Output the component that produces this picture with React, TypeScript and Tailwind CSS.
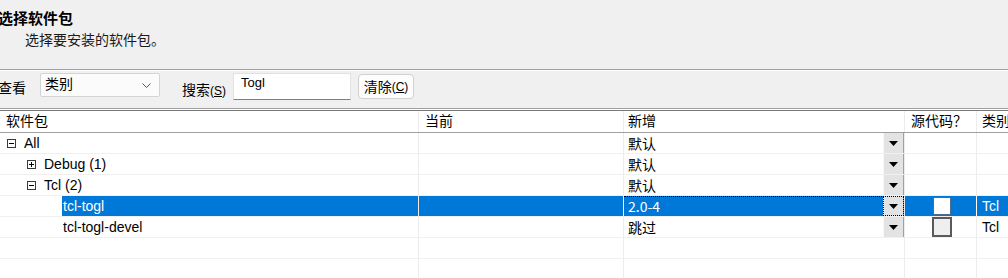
import React from "react";

const F = "font-['Liberation_Sans','Noto_Sans_CJK_SC',sans-serif]";

function TreeBox({ plus }: { plus?: boolean }) {
  return (
    <svg width="9" height="9" viewBox="0 0 9 9" className="block shrink-0">
      <rect x="0.5" y="0.5" width="8" height="8" fill="white" stroke="#3a3a3a" />
      <line x1="2" y1="4.5" x2="7" y2="4.5" stroke="#000" />
      {plus && <line x1="4.5" y1="2" x2="4.5" y2="7" stroke="#000" />}
    </svg>
  );
}

function DropBtn({ focus }: { focus?: boolean }) {
  return (
    <div
      className={
        "w-[21px] h-[20px] shrink-0 bg-[#e3e3e3] border-l border-l-[#f8f8f8] border-r border-r-[#a0a0a0] flex items-center justify-center " +
        (focus ? "outline outline-1 outline-dotted outline-black -outline-offset-1" : "")
      }
    >
      <svg width="9" height="5" viewBox="0 0 9 5">
        <polygon points="0,0 9,0 4.5,5" fill="#000" />
      </svg>
    </div>
  );
}

type RowT = {
  level?: number;
  box?: "plus" | "minus";
  name?: string;
  leaf?: boolean;
  add?: string;
  sel?: boolean;
  check?: "white" | "gray";
  cat?: string;
};

const rows: RowT[] = [
  { level: 0, box: "minus", name: "All", add: "默认" },
  { level: 1, box: "plus", name: "Debug (1)", add: "默认" },
  { level: 1, box: "minus", name: "Tcl (2)", add: "默认" },
  { leaf: true, name: "tcl-togl", add: "2.0-4", sel: true, check: "white", cat: "Tcl" },
  { leaf: true, name: "tcl-togl-devel", add: "跳过", check: "gray", cat: "Tcl" },
  {},
  {},
];

function Row({ r }: { r: RowT }) {
  const blue = "bg-[#0078d7] text-white";
  const sepLine = r.sel ? "border-r-white" : "border-r-[#ececec]";
  return (
    <div className="flex h-[21px] border-b border-b-[#f0f0f0] text-[14px] leading-[20px] text-black">
      {/* col1 */}
      <div className={"w-[419px] shrink-0 flex items-center border-r " + (r.sel ? "border-r-[#ececec]" : "border-r-[#ececec]")}>
        {r.name && !r.leaf && (
          <div className={"flex items-center " + (r.level === 0 ? "pl-[7px]" : "pl-[27px]")}>
            <TreeBox plus={r.box === "plus"} />
            <span className="ml-[8px]">{r.name}</span>
          </div>
        )}
        {r.leaf && (
          <div className="flex h-full flex-1 pl-[62px]">
            <div className={"flex-1 h-full pl-[1px] " + (r.sel ? blue : "")}>{r.name}</div>
          </div>
        )}
      </div>
      {/* col2 */}
      <div className={"w-[205px] shrink-0 border-r " + sepLine + " " + (r.sel ? blue : "")}></div>
      {/* col3 */}
      <div className="w-[281px] shrink-0 border-r border-r-[#ececec] flex relative">
        {r.sel && <div className="absolute left-0 right-0 top-0 h-0 border-t border-dotted border-black" />}
        <div className={"flex-1 pl-[4px] " + (r.sel ? blue : "")}>
          {r.add && <span className="font-['Noto_Sans_CJK_SC','Liberation_Sans',sans-serif]">{r.add}</span>}
        </div>
        {r.add && <DropBtn focus={r.sel} />}
      </div>
      {/* col4 */}
      <div className={"w-[72px] shrink-0 border-r flex items-center justify-center " + sepLine + " " + (r.sel ? blue : "")}>
        {r.check === "white" && <div className="w-[18px] h-[18px] bg-white border border-[#4a6b94] ml-[2px]" />}
        {r.check === "gray" && <div className="w-[20px] h-[20px] bg-[#efefef] border-2 border-[#5a5a5a] ml-[2px]" />}
      </div>
      {/* col5 */}
      <div className={"flex-1 pl-[5px] " + (r.sel ? blue : "")}>{r.cat}</div>
    </div>
  );
}

export default function App() {
  return (
    <div className={"w-[1008px] h-[278px] overflow-hidden bg-[#f0f0f0] flex flex-col " + F}>
      {/* header area */}
      <div className="h-[69px] shrink-0 text-black">
        <div className="pt-[10px] -ml-[2px] text-[15px] font-bold leading-[18px]">选择软件包</div>
        <div className="pl-[25px] mt-[3px] text-[14px] leading-[18px] text-[#1a1a1a]">选择要安装的软件包。</div>
      </div>
      <div className="h-px bg-[#a0a0a0] shrink-0" />
      <div className="h-px bg-white shrink-0" />
      {/* toolbar */}
      <div className="h-[37px] shrink-0 flex items-start text-[14px] text-black">
        <div className="-ml-[2px] w-[42px] mt-[7px] leading-[20px]">查看</div>
        <div className="mt-[2px] w-[120px] h-[24px] bg-[#fbfbfb] border border-[#d4d4d4] rounded-[2px] flex items-start justify-between pl-[4px] pr-[8px]">
          <span className="leading-[20px]">类别</span>
          <svg width="9" height="5" viewBox="0 0 9 5" className="mt-[9px]">
            <polyline points="0.5,0.5 4.5,4.5 8.5,0.5" fill="none" stroke="#555" />
          </svg>
        </div>
        <div className="ml-[22px] w-[51px] mt-[9px] leading-[20px] whitespace-nowrap">
          搜索<span className="text-[12px]">(<span className="underline">S</span>)</span>
        </div>
        <div className="mt-[2px] w-[118px] h-[27px] bg-white border border-[#e2e2e2] border-b-[#808080] pl-[7px] text-[13px] leading-[18px]">
          Togl
        </div>
        <div className="mt-[3px] ml-[7px] w-[56px] h-[25px] bg-[#fdfdfd] border border-[#d0d0d0] rounded-[4px] flex items-center justify-center leading-[20px] whitespace-nowrap">
          清除<span className="text-[12px]">(<span className="underline">C</span>)</span>
        </div>
      </div>
      <div className="h-px bg-[#a0a0a0] shrink-0" />
      <div className="h-px bg-white shrink-0" />
      <div className="h-px bg-[#7a7a7a] shrink-0" />
      {/* table */}
      <div className="flex-1 bg-white">
        <div className="flex h-[22px] border-b border-b-[#a0a0a0] text-[14px] leading-[21px] text-black">
          <div className="w-[419px] shrink-0 border-r border-r-[#ececec] pl-[6px]">软件包</div>
          <div className="w-[205px] shrink-0 border-r border-r-[#ececec] pl-[6px]">当前</div>
          <div className="w-[281px] shrink-0 border-r border-r-[#ececec] pl-[4px]">新增</div>
          <div className="w-[72px] shrink-0 border-r border-r-[#ececec] pl-[6px] whitespace-nowrap">源代码？</div>
          <div className="flex-1 pl-[5px] whitespace-nowrap overflow-hidden">类别</div>
        </div>
        {rows.map((r, i) => (
          <Row key={i} r={r} />
        ))}
      </div>
    </div>
  );
}
